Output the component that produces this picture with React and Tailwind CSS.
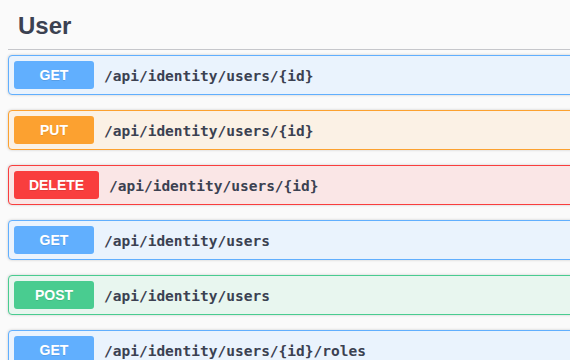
import React from 'react';

const ops = [
  { method: 'GET', path: '/api/identity/users/{id}' },
  { method: 'PUT', path: '/api/identity/users/{id}' },
  { method: 'DELETE', path: '/api/identity/users/{id}' },
  { method: 'GET', path: '/api/identity/users' },
  { method: 'POST', path: '/api/identity/users' },
  { method: 'GET', path: '/api/identity/users/{id}/roles' },
];

const styles = {
  GET: { block: 'bg-[#eaf3fd] border-[#61affe]', badge: 'bg-[#61affe] w-[80px]' },
  PUT: { block: 'bg-[#fbf1e5] border-[#fca130]', badge: 'bg-[#fca130] w-[80px]' },
  DELETE: { block: 'bg-[#fae6e6] border-[#f93e3e]', badge: 'bg-[#f93e3e] w-[85px]' },
  POST: { block: 'bg-[#e8f6ef] border-[#49cc90]', badge: 'bg-[#49cc90] w-[80px]' },
};

const OpBlock = ({ method, path }) => {
  const s = styles[method];
  return (
    <div className={`mb-[15px] flex items-center rounded-[4px] border p-[5px] shadow-[0_0_3px_rgba(0,0,0,0.19)] ${s.block}`}>
      <span
        className={`flex h-[28px] shrink-0 items-center justify-center rounded-[3px] pt-px font-['Liberation_Sans',Arial,sans-serif] text-[14px] font-bold text-white [text-shadow:0_1px_0_rgba(0,0,0,0.1)] ${s.badge}`}
      >
        {method}
      </span>
      <span className="px-[10px] pt-[3px] font-['DejaVu_Sans_Mono',monospace] text-[14.5px] font-bold text-[#3b4151]">
        {path}
      </span>
    </div>
  );
};

export default function App() {
  return (
    <div className="h-[360px] w-[570px] overflow-hidden bg-[#fafafa]">
      <div className="w-[640px] pl-2 pt-[2px]">
        {/* Tag header */}
        <h4 className="mb-[5px] border-b border-[#c6c7cb] pb-[9px] pl-[10px] pt-[10px] font-['Liberation_Sans',Arial,sans-serif] text-[24px] font-bold leading-[28px] text-[#3b4151]">
          User
        </h4>
        {ops.map((op, i) => (
          <OpBlock key={i} method={op.method} path={op.path} />
        ))}
      </div>
    </div>
  );
}
